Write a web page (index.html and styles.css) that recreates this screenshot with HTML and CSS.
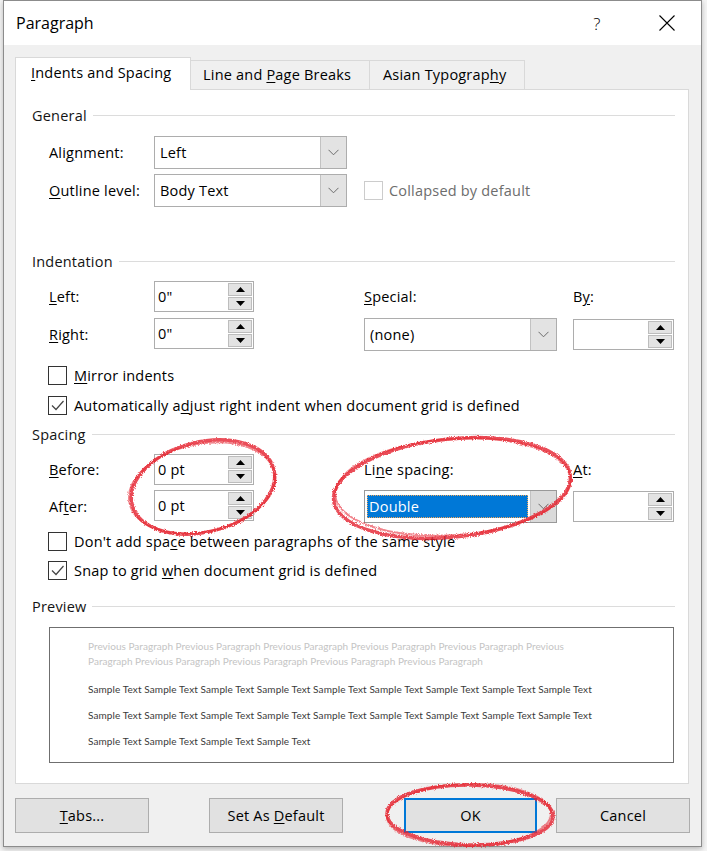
FILE: index.html
```html
<!DOCTYPE html>
<html>
<head>
<meta charset="utf-8">
<title>Paragraph</title>
<link rel="stylesheet" href="styles.css">
</head>
<body>
<div class="dialog">
  <div class="titlebar">
    <span class="title">Paragraph</span>
    <span class="help">?</span>
    <span class="close"><svg width="16" height="16" viewBox="0 0 16 16"><path d="M0.5 0.5 L15.5 15.5 M15.5 0.5 L0.5 15.5" stroke="#000" stroke-width="1.1" fill="none"/></svg></span>
  </div>
  <div class="body">
    <div class="tabs">
      <div class="tab active"><span><u>I</u>ndents and Spacing</span></div>
      <div class="tab t2"><span>Line and <u>P</u>age Breaks</span></div>
      <div class="tab t3"><span>Asian Typograp<u>h</u>y</span></div>
    </div>
    <div class="panel">
      <div class="heading h-general"><span>General</span><i></i></div>
      <div class="grid-general">
        <div class="label"><span>Ali<u>g</u>nment:</span></div>
        <div class="combo"><div class="combo-field">Left</div><div class="combo-btn"><svg width="11" height="7" viewBox="0 0 11 7"><path d="M0.5 0.8 L5.5 5.8 L10.5 0.8" stroke="#6b6b6b" stroke-width="1" fill="none"/></svg></div></div>
        <div></div>
        <div></div>
        <div class="label"><span><u>O</u>utline level:</span></div>
        <div class="combo"><div class="combo-field">Body Text</div><div class="combo-btn"><svg width="11" height="7" viewBox="0 0 11 7"><path d="M0.5 0.8 L5.5 5.8 L10.5 0.8" stroke="#6b6b6b" stroke-width="1" fill="none"/></svg></div></div>
        <div></div>
        <div class="check disabled"><span class="box"></span><span>Collapsed by default</span></div>
      </div>

      <div class="heading h-indent"><span>Indentation</span><i></i></div>
      <div class="grid-six g-indent">
        <div class="label"><span><u>L</u>eft:</span></div>
        <div class="spin"><div class="spin-field">0"</div><div class="spin-btns"><div class="spin-btn"><svg width="9" height="5" viewBox="0 0 9 5"><path d="M4.5 0 L9 5 L0 5 Z" fill="#000"/></svg></div><div class="spin-btn"><svg width="9" height="5" viewBox="0 0 9 5"><path d="M0 0 L9 0 L4.5 5 Z" fill="#000"/></svg></div></div></div>
        <div></div>
        <div class="label"><span><u>S</u>pecial:</span></div>
        <div></div>
        <div class="label"><span>B<u>y</u>:</span></div>

        <div class="label"><span><u>R</u>ight:</span></div>
        <div class="spin"><div class="spin-field">0"</div><div class="spin-btns"><div class="spin-btn"><svg width="9" height="5" viewBox="0 0 9 5"><path d="M4.5 0 L9 5 L0 5 Z" fill="#000"/></svg></div><div class="spin-btn"><svg width="9" height="5" viewBox="0 0 9 5"><path d="M0 0 L9 0 L4.5 5 Z" fill="#000"/></svg></div></div></div>
        <div></div>
        <div class="combo"><div class="combo-field">(none)</div><div class="combo-btn"><svg width="11" height="7" viewBox="0 0 11 7"><path d="M0.5 0.8 L5.5 5.8 L10.5 0.8" stroke="#6b6b6b" stroke-width="1" fill="none"/></svg></div></div>
        <div></div>
        <div class="spin small"><div class="spin-field"></div><div class="spin-btns"><div class="spin-btn"><svg width="9" height="5" viewBox="0 0 9 5"><path d="M4.5 0 L9 5 L0 5 Z" fill="#000"/></svg></div><div class="spin-btn"><svg width="9" height="5" viewBox="0 0 9 5"><path d="M0 0 L9 0 L4.5 5 Z" fill="#000"/></svg></div></div></div>
      </div>
      <div class="check c-mirror"><span class="box"></span><span><u>M</u>irror indents</span></div>
      <div class="check c-auto"><span class="box"><svg width="17" height="17" viewBox="0 0 17 17"><path d="M3 8.5 L7 12.5 L14.5 4" stroke="#444" stroke-width="1.2" fill="none"/></svg></span><span>Automatically a<u>d</u>just right indent when document grid is defined</span></div>

      <div class="heading h-spacing"><span>Spacing</span><i></i></div>
      <div class="grid-six g-spacing">
        <div class="label"><span><u>B</u>efore:</span></div>
        <div class="spin"><div class="spin-field">0 pt</div><div class="spin-btns"><div class="spin-btn"><svg width="9" height="5" viewBox="0 0 9 5"><path d="M4.5 0 L9 5 L0 5 Z" fill="#000"/></svg></div><div class="spin-btn"><svg width="9" height="5" viewBox="0 0 9 5"><path d="M0 0 L9 0 L4.5 5 Z" fill="#000"/></svg></div></div></div>
        <div></div>
        <div class="label"><span>Li<u>n</u>e spacing:</span></div>
        <div></div>
        <div class="label"><span><u>A</u>t:</span></div>

        <div class="label"><span>Af<u>t</u>er:</span></div>
        <div class="spin"><div class="spin-field">0 pt</div><div class="spin-btns"><div class="spin-btn"><svg width="9" height="5" viewBox="0 0 9 5"><path d="M4.5 0 L9 5 L0 5 Z" fill="#000"/></svg></div><div class="spin-btn"><svg width="9" height="5" viewBox="0 0 9 5"><path d="M0 0 L9 0 L4.5 5 Z" fill="#000"/></svg></div></div></div>
        <div></div>
        <div class="combo focused"><div class="combo-field"><span class="selected">Double</span></div><div class="combo-btn"><svg width="11" height="7" viewBox="0 0 11 7"><path d="M0.5 0.8 L5.5 5.8 L10.5 0.8" stroke="#6b6b6b" stroke-width="1" fill="none"/></svg></div></div>
        <div></div>
        <div class="spin small"><div class="spin-field"></div><div class="spin-btns"><div class="spin-btn"><svg width="9" height="5" viewBox="0 0 9 5"><path d="M4.5 0 L9 5 L0 5 Z" fill="#000"/></svg></div><div class="spin-btn"><svg width="9" height="5" viewBox="0 0 9 5"><path d="M0 0 L9 0 L4.5 5 Z" fill="#000"/></svg></div></div></div>
      </div>
      <div class="check c-dont"><span class="box"></span><span>Don't add spa<u>c</u>e between paragraphs of the same style</span></div>
      <div class="check c-snap"><span class="box"><svg width="17" height="17" viewBox="0 0 17 17"><path d="M3 8.5 L7 12.5 L14.5 4" stroke="#444" stroke-width="1.2" fill="none"/></svg></span><span>Snap to grid <u>w</u>hen document grid is defined</span></div>

      <div class="heading h-preview"><span>Preview</span><i></i></div>
      <div class="preview">
        <div class="prev">Previous Paragraph Previous Paragraph Previous Paragraph Previous Paragraph Previous Paragraph Previous</div>
        <div class="prev">Paragraph Previous Paragraph Previous Paragraph Previous Paragraph Previous Paragraph</div>
        <div class="sample first">Sample Text Sample Text Sample Text Sample Text Sample Text Sample Text Sample Text Sample Text Sample Text</div>
        <div class="sample">Sample Text Sample Text Sample Text Sample Text Sample Text Sample Text Sample Text Sample Text Sample Text</div>
        <div class="sample">Sample Text Sample Text Sample Text Sample Text</div>
      </div>
    </div>
    <div class="buttons">
      <div class="btn b-tabs"><span><u>T</u>abs...</span></div>
      <div class="btn b-default"><span>Set As <u>D</u>efault</span></div>
      <div class="btn b-ok"><span>OK</span></div>
      <div class="btn b-cancel"><span>Cancel</span></div>
    </div>
  </div>
</div>

<svg class="annot" width="707" height="851" viewBox="0 0 707 851">
  <defs>
    <filter id="rough" x="-10%" y="-10%" width="120%" height="120%">
      <feTurbulence type="fractalNoise" baseFrequency="0.9" numOctaves="2" seed="3" result="n"/>
      <feDisplacementMap in="SourceGraphic" in2="n" scale="3.5" xChannelSelector="R" yChannelSelector="G"/>
    </filter>
  </defs>
  <g fill="none" stroke="#e5232e" filter="url(#rough)">
    <ellipse cx="203" cy="487" rx="73" ry="45" transform="rotate(-14 203 487)" stroke-width="3.5" opacity="0.8"/>
    <ellipse cx="202" cy="488" rx="74" ry="44" transform="rotate(-12 202 488)" stroke-width="2" opacity="0.55"/>
    <ellipse cx="452" cy="488" rx="119" ry="49" transform="rotate(-6 452 488)" stroke-width="3.5" opacity="0.8"/>
    <ellipse cx="453" cy="487" rx="118" ry="48" transform="rotate(-4 453 487)" stroke-width="2" opacity="0.55"/>
    <ellipse cx="470" cy="815" rx="83" ry="30" transform="rotate(1 470 815)" stroke-width="3.5" opacity="0.8"/>
    <ellipse cx="469" cy="815" rx="82" ry="31" transform="rotate(-1 469 815)" stroke-width="2" opacity="0.55"/>
  </g>
</svg>
</body>
</html>
```

FILE: styles.css
```css
* { box-sizing: border-box; }

html, body {
  margin: 0;
  padding: 0;
}

body {
  width: 707px;
  height: 851px;
  background: #f4f4f4;
  font-family: "Open Sans", "Noto Sans", sans-serif;
  font-size: 14.5px;
  letter-spacing: 0.2px;
  color: #000;
  position: relative;
  overflow: hidden;
}

u { text-decoration: underline; text-underline-offset: 2px; text-decoration-thickness: 1px; }

.dialog {
  margin-left: 3px;
  width: 699px;
  height: 847px;
  border: 1px solid #8c8c8c;
  background: #f0f0f0;
  box-shadow: 0 2px 5px rgba(0,0,0,0.25);
  display: flex;
  flex-direction: column;
}

.titlebar {
  height: 44px;
  background: #fff;
  display: flex;
  align-items: center;
  padding-left: 12px;
  padding-right: 11px;
  flex: none;
}

.title {
  font-size: 16px;
  letter-spacing: 0;
  flex: 1;
}

.help {
  width: 46px;
  text-align: center;
  font-size: 17px;
  font-weight: 300;
  margin-right: 24px;
}

.close {
  width: 46px;
  display: flex;
  justify-content: center;
  align-items: center;
}

.body {
  flex: 1;
  padding: 12px 0 0 11px;
}

.tabs {
  display: flex;
  align-items: flex-end;
  height: 32px;
  position: relative;
  z-index: 1;
}

.tab {
  height: 29px;
  border: 1px solid #d9d9d9;
  border-bottom: none;
  background: #f0f0f0;
  display: flex;
  align-items: center;
  padding-bottom: 1px;
  white-space: nowrap;
}

.tab.active {
  height: 33px;
  margin-bottom: -1px;
  background: #fff;
  width: 176px;
  padding-left: 15px;
  padding-bottom: 3px;
}

.tab.t2 { width: 180px; margin-left: -1px; padding-left: 12px; }
.tab.t3 { width: 156px; margin-left: -1px; padding-left: 13px; }

.panel {
  width: 674px;
  height: 695px;
  border: 1px solid #d9d9d9;
  background: #fff;
  padding: 0 13px 0 16px;
}

.heading {
  display: flex;
  align-items: center;
  height: 20px;
  line-height: 20px;
  color: #141414;
}

.heading i {
  flex: 1;
  height: 1px;
  background: #dcdcdc;
  margin-left: 6px;
  margin-top: -2px;
}

.h-general { margin-top: 16px; }
.h-indent { margin-top: 45px; }
.h-spacing { margin-top: 10px; }
.h-preview { margin-top: 17px; }

.label {
  display: flex;
  align-items: center;
  white-space: nowrap;
}

.grid-general {
  margin-top: 10px;
  margin-left: 17px;
  display: grid;
  grid-template-columns: 105px 193px 17px auto;
  grid-template-rows: 33px 33px;
  row-gap: 5px;
}

.grid-six {
  margin-left: 17px;
  display: grid;
  grid-template-columns: 105px 100px 110px 193px 16px 101px;
}

.g-indent {
  margin-top: 9px;
  grid-template-rows: 31px 33px;
  row-gap: 6px;
}

.g-spacing {
  margin-top: 9px;
  grid-template-rows: 31px 33px;
  row-gap: 5px;
}

.combo {
  display: flex;
  border: 1px solid #adadad;
  background: #fff;
  height: 33px;
}

.combo-field {
  flex: 1;
  display: flex;
  align-items: center;
  padding-left: 5px;
}

.combo-btn {
  width: 26px;
  background: #e3e3e3;
  border-left: 1px solid #c2c2c2;
  display: flex;
  align-items: center;
  justify-content: center;
}

.combo.focused { border-color: #999; }
.combo.focused .combo-field { padding: 4px 2px 4px 2px; }
.combo.focused .combo-btn { background: #dadada; }

.selected {
  display: flex;
  align-items: center;
  width: 100%;
  height: 100%;
  background: #0078d7;
  color: #fff;
  padding-left: 2px;
  outline: 1px dotted #f2a65a;
  outline-offset: -1px;
}

.spin {
  display: flex;
  height: 31px;
  border: 1px solid #adadad;
  background: #fff;
}

.spin.small { height: 31px; align-self: center; }

.spin-field {
  flex: 1;
  display: flex;
  align-items: center;
  padding-left: 3px;
}

.spin-btns {
  width: 25px;
  display: flex;
  flex-direction: column;
  gap: 1px;
  padding: 1px 1px 1px 0;
}

.spin-btn {
  flex: 1;
  background: #e3e3e3;
  border: 1px solid #bdbdbd;
  display: flex;
  align-items: center;
  justify-content: center;
}

.check {
  display: flex;
  align-items: center;
  height: 20px;
  gap: 7px;
  white-space: nowrap;
}

.check .box {
  width: 19px;
  height: 19px;
  border: 1px solid #333;
  background: #fff;
  display: flex;
  align-items: center;
  justify-content: center;
  flex: none;
}

.check.disabled { color: #6d6d6d; gap: 6px; }
.check.disabled .box { border-color: #cccccc; }

.grid-general .check { align-self: center; }

.c-mirror { margin-top: 14px; margin-left: 16px; }
.c-auto { margin-top: 10px; margin-left: 16px; }
.c-dont { margin-top: 8px; margin-left: 16px; }
.c-snap { margin-top: 9px; margin-left: 16px; }

.preview {
  margin-top: 10px;
  margin-left: 17px;
  width: 625px;
  height: 136px;
  border: 1px solid #6f6f6f;
  padding: 11px 0 0 38px;
  font-family: "Lato", "Liberation Sans", sans-serif;
  white-space: nowrap;
  letter-spacing: 0;
}

.prev {
  font-size: 10px;
  line-height: 15px;
  color: #c4c4c4;
  letter-spacing: 0.03px;
}

.sample {
  font-size: 10px;
  line-height: 26px;
  color: #3a3a3a;
  letter-spacing: 0.1px;
}

.sample.first { margin-top: 7px; }

.buttons {
  display: flex;
  margin-top: 14px;
  height: 35px;
}

.btn {
  height: 35px;
  width: 134px;
  background: #e1e1e1;
  border: 1px solid #adadad;
  display: flex;
  align-items: center;
  justify-content: center;
  padding-bottom: 1px;
}

.b-default { margin-left: 60px; }
.b-ok { margin-left: 61px; width: 133px; border: 2px solid #0078d7; }
.b-cancel { margin-left: 19px; }

.annot {
  position: absolute;
  left: 0;
  top: 0;
  pointer-events: none;
}
```
